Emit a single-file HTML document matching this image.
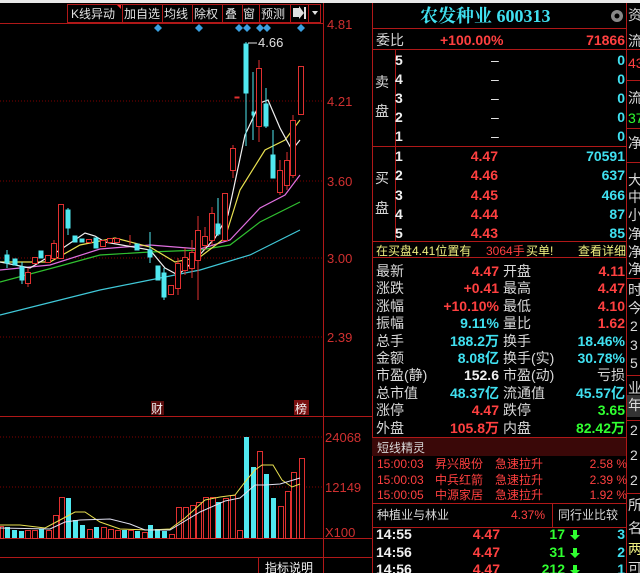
<!DOCTYPE html>
<html><head><meta charset="utf-8">
<style>
html,body{margin:0;padding:0;background:#000;width:640px;height:573px;overflow:hidden;}
body{position:relative;font-family:"Liberation Sans","Noto Sans CJK SC",sans-serif;}
.t{position:absolute;white-space:nowrap;font-size:14px;line-height:16px;}
.r{text-align:right;}
.lb{color:#d8d8d8;}
.red{color:#ff4040;}
.cy{color:#40e0f0;}
.gr{color:#30ff30;}
.ye{color:#f0f080;}
.wh{color:#f0f0f0;}
.b{font-weight:bold;}
.sm{font-size:12px;}
.nb{font-weight:bold;}
</style></head><body>
<div style="position:absolute;left:0;top:0;width:640px;height:3px;background:#e8e8e8"></div>

<svg width="373" height="573" style="position:absolute;left:0;top:0" xmlns="http://www.w3.org/2000/svg">
<g stroke="#800000" stroke-width="1" stroke-dasharray="1,2">
<line x1="0" y1="101" x2="323" y2="101"/><line x1="0" y1="181" x2="323" y2="181"/>
<line x1="0" y1="258" x2="323" y2="258"/><line x1="0" y1="337" x2="323" y2="337"/>
<line x1="0" y1="437" x2="323" y2="437"/><line x1="0" y1="487" x2="323" y2="487"/>
</g>
<g stroke="#b01818" stroke-width="1">
<line x1="0" y1="23.5" x2="323" y2="23.5"/>
<line x1="323.5" y1="3" x2="323.5" y2="573"/>
<line x1="0" y1="416.5" x2="373" y2="416.5"/>
<line x1="0" y1="538.5" x2="373" y2="538.5"/>
<line x1="0" y1="557.5" x2="373" y2="557.5"/>
<line x1="258.5" y1="557" x2="258.5" y2="573"/>
<line x1="372.5" y1="3" x2="372.5" y2="573"/>
<line x1="67.5" y1="4" x2="67.5" y2="23"/>
</g>
<g stroke="#b01818" fill="none"><rect x="67.5" y="4.5" width="253" height="18"/>
<line x1="122.5" y1="5" x2="122.5" y2="22"/><line x1="162.5" y1="5" x2="162.5" y2="22"/>
<line x1="192.5" y1="5" x2="192.5" y2="22"/><line x1="222.5" y1="5" x2="222.5" y2="22"/>
<line x1="242.5" y1="5" x2="242.5" y2="22"/><line x1="259.5" y1="5" x2="259.5" y2="22"/>
<line x1="290.5" y1="5" x2="290.5" y2="22"/><line x1="308.5" y1="5" x2="308.5" y2="22"/></g>
<polygon points="117,5 121,5 121,9" fill="#ff3030"/>
<g font-family="Liberation Sans,Noto Sans CJK SC,sans-serif" font-size="12" fill="#e0e0e0">
<text x="71" y="18">K线异动</text><text x="124" y="18">加自选</text><text x="164" y="18">均线</text>
<text x="194" y="18">除权</text><text x="225" y="18">叠</text><text x="243" y="18">窗</text><text x="261" y="18">预测</text>
</g>
<polygon points="293,8 299,8 299,6 304,13 299,19 299,17 293,17" fill="#e0e0e0"/>
<rect x="304" y="7" width="2" height="12" fill="#e0e0e0"/>
<polygon points="312,11 318,11 315,15" fill="#e0e0e0"/>
<g fill="#3aa0e0">
<polygon points="158,24 162,28 158,32 154,28"/><polygon points="199,24 203,28 199,32 195,28"/>
<polygon points="239,24 243,28 239,32 235,28"/><polygon points="247,24 251,28 247,32 243,28"/>
<polygon points="260,24 264,28 260,32 256,28"/><polygon points="267,24 271,28 267,32 263,28"/>
<polygon points="301,24 305,28 301,32 297,28"/>
</g>
<g font-family="Liberation Sans,sans-serif" font-size="13" fill="#d03030">
<text x="327" y="29">4.81</text><text x="327" y="106">4.21</text><text x="327" y="186">3.60</text>
<text x="327" y="263">3.00</text><text x="327" y="342">2.39</text>
<text x="325" y="442">24068</text><text x="325" y="492">12149</text><text x="325" y="537">X100</text>
</g>
<text x="258" y="47" font-family="Liberation Sans,sans-serif" font-size="13" fill="#e0e0e0">4.66</text>
<line x1="248" y1="43" x2="257" y2="43" stroke="#e0e0e0"/>
<g fill="none" stroke-width="1.2">
<polyline stroke="#40c8d8" points="0,315 40,305 100,290 150,280 200,270 250,255 300,230"/>
<polyline stroke="#30c030" points="0,282 60,266 100,255 150,252 200,250 230,245 260,222 300,202"/>
<polyline stroke="#e070e0" points="0,270 50,265 100,249 150,245 200,249 230,240 260,208 285,195 300,175"/>
<polyline stroke="#e8e050" points="0,262 50,262 80,245 115,238 150,247 175,262 200,257 225,238 240,190 265,150 285,140 300,120"/>
<polyline stroke="#f0f0f0" points="0,262 30,268 60,250 85,233 95,236 105,242 150,250 165,268 178,275 195,260 215,238 228,215 245,135 260,103 268,100 280,128 292,150 300,140"/>
</g>
<g stroke="#e03030" fill="#000" stroke-width="1">
<line x1="28" y1="268" x2="28" y2="287"/><rect x="25.5" y="272.5" width="5" height="11"/>
<rect x="32.5" y="257.5" width="5" height="6"/><rect x="45.5" y="255.5" width="5" height="7"/>
<line x1="54" y1="240" x2="54" y2="258"/><rect x="51.5" y="243.5" width="5" height="15"/>
<rect x="58.5" y="204.5" width="5" height="54"/>
<rect x="86.5" y="239.5" width="5" height="3"/><rect x="100.5" y="240.5" width="5" height="6"/>
<rect x="107.5" y="238.5" width="5" height="4"/><rect x="114.5" y="238.5" width="5" height="4"/>
<line x1="130" y1="235" x2="130" y2="245"/>
<rect x="168.5" y="285.5" width="5" height="9"/>
<line x1="178" y1="258" x2="178" y2="295"/><rect x="175.5" y="263.5" width="5" height="25"/>
<line x1="185" y1="248" x2="185" y2="275"/><rect x="182.5" y="257.5" width="5" height="13"/>
<line x1="192" y1="240" x2="192" y2="278"/><rect x="189.5" y="252.5" width="5" height="16"/>
<line x1="198" y1="216" x2="198" y2="300"/><rect x="195.5" y="230.5" width="5" height="30"/>
<line x1="205" y1="227" x2="205" y2="250"/><rect x="202.5" y="236.5" width="5" height="9"/>
<line x1="212" y1="207" x2="212" y2="245"/><rect x="209.5" y="213.5" width="5" height="27"/>
<rect x="222.5" y="193.5" width="5" height="47"/>
<line x1="233" y1="145" x2="233" y2="178"/><rect x="230.5" y="148.5" width="5" height="22"/>
<line x1="259" y1="60" x2="259" y2="142"/><rect x="256.5" y="68.5" width="5" height="58"/>
<line x1="280" y1="160" x2="280" y2="195"/><rect x="277.5" y="170.5" width="5" height="22"/>
<line x1="287" y1="152" x2="287" y2="190"/><rect x="284.5" y="160.5" width="5" height="25"/>
<line x1="293" y1="115" x2="293" y2="178"/><rect x="290.5" y="120.5" width="5" height="55"/>
<rect x="298.5" y="66.5" width="5" height="48"/>
<rect x="235" y="97" width="4" height="1" fill="#e03030"/>
</g>
<g fill="#50e8f0" stroke="#50e8f0">
<line x1="7" y1="250" x2="7" y2="268"/><rect x="5" y="255" width="4" height="8"/>
<rect x="13" y="259" width="4" height="6"/>
<line x1="22" y1="262" x2="22" y2="284"/><rect x="20" y="267" width="4" height="13"/>
<rect x="39" y="251" width="4" height="7"/>
<line x1="68" y1="208" x2="68" y2="235"/><rect x="66" y="210" width="4" height="18"/>
<rect x="73" y="236" width="4" height="6"/><rect x="80" y="239" width="4" height="3"/>
<rect x="94" y="238" width="4" height="10"/><rect x="135" y="244" width="4" height="6"/>
<line x1="150" y1="232" x2="150" y2="263"/><rect x="148" y="250" width="4" height="7"/>
<rect x="156" y="266" width="4" height="14"/>
<line x1="164" y1="268" x2="164" y2="300"/><rect x="162" y="273" width="4" height="24"/>
<line x1="218" y1="198" x2="218" y2="236"/><rect x="216" y="224" width="4" height="10"/>
<line x1="246" y1="42" x2="246" y2="146"/><rect x="244" y="44" width="4" height="49"/>
<line x1="253" y1="72" x2="253" y2="140"/><rect x="252" y="112" width="2" height="3"/>
<line x1="266" y1="88" x2="266" y2="128"/><rect x="264" y="104" width="4" height="22"/>
<line x1="273" y1="130" x2="273" y2="178"/><rect x="271" y="155" width="4" height="23"/>
</g>
<rect x="151" y="401" width="13" height="14" fill="#5a0c0c"/>
<rect x="294" y="400" width="15" height="15" fill="#7a1010"/>
<g font-family="Liberation Sans,Noto Sans CJK SC,sans-serif" font-size="12" fill="#f0f0f0">
<text x="151" y="413">财</text><text x="295" y="413">榜</text>
<text x="265" y="572">指标说明</text>
</g>
<g stroke="#e03030" fill="#000">
<rect x="0.5" y="526.5" width="3" height="12"/><rect x="25.5" y="530.5" width="5" height="8"/><rect x="32.5" y="530.5" width="5" height="8"/>
<rect x="46.5" y="530.5" width="5" height="8"/><rect x="53.5" y="515.5" width="5" height="23"/><rect x="59.5" y="497.5" width="5" height="41"/>
<rect x="87.5" y="529.5" width="5" height="9"/><rect x="101.5" y="527.5" width="5" height="11"/><rect x="108.5" y="529.5" width="5" height="9"/>
<rect x="115.5" y="530.5" width="5" height="8"/><rect x="128.5" y="530.5" width="5" height="8"/><rect x="142.5" y="532.5" width="5" height="6"/>
<rect x="169.5" y="534.5" width="5" height="4"/><rect x="176.5" y="507.5" width="5" height="31"/><rect x="183.5" y="507.5" width="5" height="31"/>
<rect x="190.5" y="505.5" width="5" height="33"/><rect x="196.5" y="502.5" width="5" height="36"/><rect x="203.5" y="497.5" width="5" height="41"/>
<rect x="210.5" y="497.5" width="5" height="41"/><rect x="223.5" y="498.5" width="5" height="40"/><rect x="230.5" y="495.5" width="5" height="43"/>
<rect x="237.5" y="530.5" width="5" height="8"/><rect x="257.5" y="451.5" width="5" height="87"/><rect x="278.5" y="506.5" width="5" height="32"/>
<rect x="285.5" y="491.5" width="5" height="47"/><rect x="291.5" y="472.5" width="5" height="66"/><rect x="299.5" y="458.5" width="5" height="80"/>
</g>
<g fill="#50e8f0">
<rect x="5" y="527" width="5" height="11"/><rect x="12" y="530" width="5" height="8"/><rect x="19" y="531" width="5" height="7"/>
<rect x="39" y="529" width="5" height="9"/><rect x="66" y="498" width="5" height="40"/><rect x="73" y="520" width="5" height="18"/>
<rect x="80" y="525" width="5" height="13"/><rect x="94" y="527" width="5" height="11"/><rect x="122" y="530" width="5" height="8"/>
<rect x="135" y="531" width="5" height="7"/><rect x="148" y="525" width="5" height="13"/><rect x="155" y="529" width="5" height="9"/>
<rect x="162" y="531" width="5" height="7"/><rect x="216" y="502" width="5" height="36"/><rect x="244" y="437" width="5" height="101"/>
<rect x="251" y="467" width="5" height="71"/><rect x="264" y="474" width="5" height="64"/><rect x="271" y="498" width="5" height="40"/>
</g>
<g fill="none" stroke-width="1">
<polyline stroke="#e8e050" points="0,525 20,525 45,528 60,520 75,512 85,512 100,522 120,529 150,530 170,529 185,518 205,500 220,497 235,495 245,482 255,470 262,465 273,465 282,480 292,487 300,484"/>
<polyline stroke="#e0e0f0" points="0,528 50,529 65,522 80,520 110,519 130,524 145,530 170,530 200,512 225,501 240,498 255,485 265,485 280,484 300,478"/>
</g>
</svg>

<svg width="268" height="573" style="position:absolute;left:372px;top:0" xmlns="http://www.w3.org/2000/svg">
<rect x="0" y="437" width="254" height="19" fill="#3a0808"/>
<g stroke="#b01818" stroke-width="1" fill="none">
<line x1="254.5" y1="3" x2="254.5" y2="573"/>
<line x1="0" y1="28.5" x2="254" y2="28.5"/>
<line x1="0" y1="49.5" x2="254" y2="49.5"/>
<line x1="0" y1="146.5" x2="254" y2="146.5"/>
<line x1="0" y1="241.5" x2="254" y2="241.5"/>
<line x1="0" y1="257.5" x2="254" y2="257.5"/>
<line x1="0" y1="437.5" x2="254" y2="437.5"/>
<line x1="0" y1="503.5" x2="254" y2="503.5"/>
<line x1="0" y1="527.5" x2="254" y2="527.5"/>
<line x1="23.5" y1="50" x2="23.5" y2="241"/>
<line x1="180.5" y1="504" x2="180.5" y2="527"/>
<line x1="254" y1="49.5" x2="268" y2="49.5"/><line x1="254" y1="80.5" x2="268" y2="80.5"/>
<line x1="254" y1="128.5" x2="268" y2="128.5"/><line x1="254" y1="162.5" x2="268" y2="162.5"/>
<line x1="254" y1="278.5" x2="268" y2="278.5"/><line x1="254" y1="375.5" x2="268" y2="375.5"/>
<line x1="254" y1="420.5" x2="268" y2="420.5"/><line x1="254" y1="493.5" x2="268" y2="493.5"/>
</g>
<rect x="255" y="395" width="13" height="22" fill="#333"/>
<circle cx="245" cy="16" r="6" fill="#888"/><circle cx="245" cy="16" r="2.5" fill="#000"/>
<g fill="#30ff30">
<polygon points="201,530 205,530 205,535 208,535 203,540 198,535 201,535"/>
<polygon points="201,548 205,548 205,553 208,553 203,558 198,553 201,553"/>
<polygon points="201,565 205,565 205,570 208,570 203,575 198,570 201,570"/>
</g>
</svg>

<div class="t b cy" style="left:420px;top:6px;font-size:18px;line-height:20px;font-family:'Liberation Serif','Noto Serif CJK SC',serif;">农发种业 600313</div>

<div class="t lb" style="left:376px;top:32px">委比</div>
<div class="t red nb" style="left:440px;top:32px">+100.00%</div>
<div class="t red r nb" style="left:540px;top:32px;width:85px">71866</div>

<div class="t lb" style="left:375px;top:74px">卖</div>
<div class="t lb" style="left:375px;top:103px">盘</div>
<div class="t lb" style="left:375px;top:170px">买</div>
<div class="t lb" style="left:375px;top:200px">盘</div>

<div class="t wh nb" style="left:395px;top:52px">5</div><div class="t wh nb" style="left:395px;top:71px">4</div><div class="t wh nb" style="left:395px;top:90px">3</div><div class="t wh nb" style="left:395px;top:109px">2</div><div class="t wh nb" style="left:395px;top:128px">1</div>
<div class="t wh" style="left:491px;top:52px">–</div><div class="t wh" style="left:491px;top:71px">–</div><div class="t wh" style="left:491px;top:90px">–</div><div class="t wh" style="left:491px;top:109px">–</div><div class="t wh" style="left:491px;top:128px">–</div>
<div class="t cy r nb" style="left:560px;top:52px;width:65px">0</div><div class="t cy r nb" style="left:560px;top:71px;width:65px">0</div><div class="t cy r nb" style="left:560px;top:90px;width:65px">0</div><div class="t cy r nb" style="left:560px;top:109px;width:65px">0</div><div class="t cy r nb" style="left:560px;top:128px;width:65px">0</div>

<div class="t wh nb" style="left:395px;top:148px">1</div><div class="t wh nb" style="left:395px;top:167px">2</div><div class="t wh nb" style="left:395px;top:187px">3</div><div class="t wh nb" style="left:395px;top:206px">4</div><div class="t wh nb" style="left:395px;top:225px">5</div>
<div class="t red r nb" style="left:430px;top:148px;width:68px">4.47</div><div class="t red r nb" style="left:430px;top:167px;width:68px">4.46</div><div class="t red r nb" style="left:430px;top:187px;width:68px">4.45</div><div class="t red r nb" style="left:430px;top:206px;width:68px">4.44</div><div class="t red r nb" style="left:430px;top:225px;width:68px">4.43</div>
<div class="t cy r nb" style="left:540px;top:148px;width:85px">70591</div><div class="t cy r nb" style="left:540px;top:167px;width:85px">637</div><div class="t cy r nb" style="left:540px;top:187px;width:85px">466</div><div class="t cy r nb" style="left:540px;top:206px;width:85px">87</div><div class="t cy r nb" style="left:540px;top:225px;width:85px">85</div>

<div class="t ye sm" style="left:376px;top:243px">在买盘4.41位置有</div>
<div class="t red sm" style="left:486px;top:243px">3064手</div>
<div class="t ye sm" style="left:526px;top:243px">买单!</div>
<div class="t ye sm" style="left:578px;top:243px">查看详细</div>

<div class="t lb" style="left:376px;top:263px;line-height:17.4px">最新<br>涨跌<br>涨幅<br>振幅<br>总手<br>金额<br>市盈(静)<br>总市值<br>涨停<br>外盘</div>
<div class="t lb" style="left:503px;top:263px;line-height:17.4px">开盘<br>最高<br>最低<br>量比<br>换手<br>换手(实)<br>市盈(动)<br>流通值<br>跌停<br>内盘</div>
<div class="t r nb" style="left:420px;top:263px;width:79px;line-height:17.4px"><span class="red">4.47</span><br><span class="red">+0.41</span><br><span class="red">+10.10%</span><br><span class="cy">9.11%</span><br><span class="cy">188.2万</span><br><span class="cy">8.08亿</span><br><span class="wh">152.6</span><br><span class="cy">48.37亿</span><br><span class="red">4.47</span><br><span class="red">105.8万</span></div>
<div class="t r nb" style="left:545px;top:263px;width:80px;line-height:17.4px"><span class="red">4.11</span><br><span class="red">4.47</span><br><span class="red">4.10</span><br><span class="red">1.62</span><br><span class="cy">18.46%</span><br><span class="cy">30.78%</span><br><span class="lb" style="font-weight:normal">亏损</span><br><span class="cy">45.57亿</span><br><span class="gr">3.65</span><br><span class="gr">82.42万</span></div>

<div class="t lb sm" style="left:377px;top:440px">短线精灵</div>
<div class="t red sm" style="left:377px;top:457px;line-height:15.5px">15:00:03<br>15:00:03<br>15:00:05</div>
<div class="t red sm" style="left:435px;top:457px;line-height:15.5px">昇兴股份<br>中兵红箭<br>中源家居</div>
<div class="t red sm" style="left:495px;top:457px;line-height:15.5px">急速拉升<br>急速拉升<br>急速拉升</div>
<div class="t red sm r" style="left:580px;top:457px;width:47px;line-height:15.5px">2.58 %<br>2.39 %<br>1.92 %</div>

<div class="t lb sm" style="left:377px;top:507px">种植业与林业</div>
<div class="t red sm r" style="left:500px;top:507px;width:45px">4.37%</div>
<div class="t lb sm" style="left:558px;top:507px">同行业比较</div>

<div class="t wh nb" style="left:376px;top:526px;line-height:17.5px">14:55<br>14:56<br>14:56</div>
<div class="t red r nb" style="left:440px;top:526px;width:60px;line-height:17.5px">4.47<br>4.47<br>4.47</div>
<div class="t gr r nb" style="left:520px;top:526px;width:45px;line-height:17.5px">17<br>31<br>212</div>
<div class="t cy r nb" style="left:600px;top:526px;width:25px;line-height:17.5px">3<br>2<br>1</div>

<div style="position:absolute;left:627px;top:0;width:13px;height:573px;overflow:hidden">
<div class="t lb" style="left:1px;top:7px">资</div>
<div class="t lb" style="left:1px;top:33px">流</div>
<div class="t red" style="left:1px;top:55px">43</div>
<div class="t lb" style="left:1px;top:90px">流</div>
<div class="t gr" style="left:1px;top:110px">37</div>
<div class="t lb" style="left:1px;top:135px">净</div>
<div class="t lb" style="left:1px;top:172px">大</div>
<div class="t lb" style="left:1px;top:189px">中</div>
<div class="t lb" style="left:1px;top:207px">小</div>
<div class="t lb" style="left:1px;top:226px">净</div>
<div class="t lb" style="left:1px;top:244px">净</div>
<div class="t lb" style="left:1px;top:261px">净</div>
<div class="t lb" style="left:1px;top:282px">时</div>
<div class="t lb" style="left:1px;top:300px">今</div>
<div class="t lb" style="left:3px;top:318px">2</div>
<div class="t lb" style="left:3px;top:337px">3</div>
<div class="t lb" style="left:3px;top:355px">5</div>
<div class="t lb" style="left:1px;top:380px">业</div>
<div class="t lb" style="left:1px;top:397px">年</div>
<div class="t lb" style="left:3px;top:422px">2</div>
<div class="t lb" style="left:3px;top:447px">2</div>
<div class="t lb" style="left:3px;top:472px">2</div>
<div class="t lb" style="left:1px;top:497px">所</div>
<div class="t lb" style="left:1px;top:520px">名</div>
<div class="t ye" style="left:1px;top:541px">两</div>
<div class="t lb" style="left:1px;top:560px">可</div>
</div>
</body></html>
